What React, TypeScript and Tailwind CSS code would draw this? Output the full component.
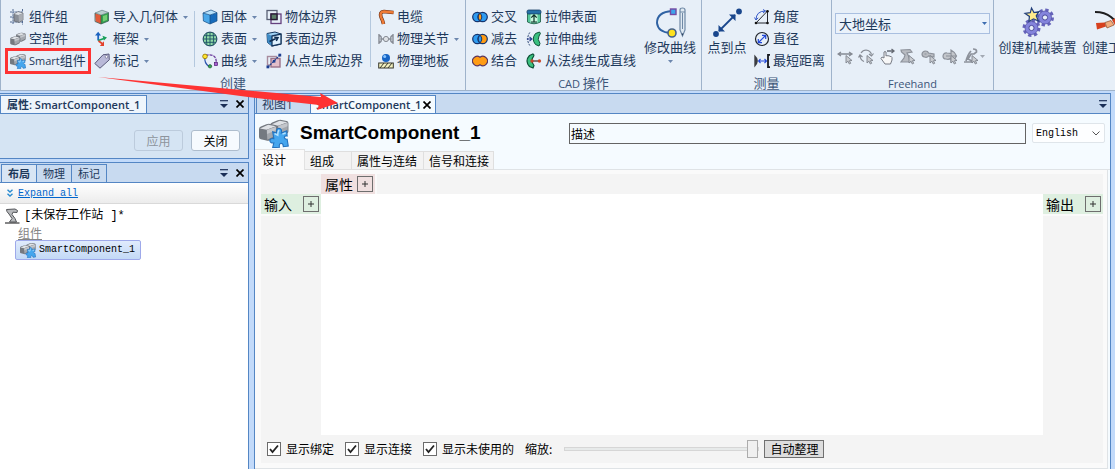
import { ReactNode } from 'react';
import clsx from 'clsx';

/* ---------- Icons ---------- */

function Svg({ children, className = 'w-4 h-4', viewBox = '0 0 16 16' }: { children: ReactNode; className?: string; viewBox?: string }) {
  return (
    <svg className={clsx('block shrink-0', className)} viewBox={viewBox} fill="none" aria-hidden="true">
      {children}
    </svg>
  );
}

function Block({ x, y, s = 1 }: { x: number; y: number; s?: number }) {
  return (
    <g transform={`translate(${x} ${y}) scale(${s})`}>
      <path d="M0 3Q0 2 1 1.6L4 .4Q5 0 6 .2L8.800 .8Q9.700 1 9.700 2V6.200Q9.700 7 9 7.500L6 9Q5 9.500 4 9.200L1 8.500Q0 8.200 0 7.300Z" fill="#747980" />
      <path d="M.5 2.600L5 .6L9.200 1.400L4.200 3.300Z" fill="#dfe2e6" />
      <path d="M4.200 3.300L9.300 1.600V6.300L4.500 8.800Z" fill="#a3a7ad" />
      <path d="M4.400 3.500L9.200 1.900V3.600L4.400 5.600Z" fill="#c3c6cb" />
    </g>
  );
}

function PartIcon() {
  return (
    <Svg>
      <Block x={6} y={1.5} />
      <Block x={0.2} y={5} />
    </Svg>
  );
}

function SmartIcon({ className = 'w-4 h-4' }: { className?: string }) {
  return (
    <Svg className={className}>
      <Block x={6} y={0.8} />
      <Block x={0} y={3} s={0.98} />
      <path
        d="M7.300 7.300L9.400 8Q9 5.600 10.700 5.500Q12.400 5.700 11.900 8L14.800 6.800L15 9.600Q13.700 9.300 13.500 10.400Q13.800 11.500 15 11.300L15.600 15L13 15.300Q13 13.600 11.700 13.500Q10.500 13.800 10.900 15.600L7.300 15.800L7.900 13.300Q5.900 13.500 5.800 12Q6 10.600 7.900 11Z"
        fill="#45a6ee"
        stroke="#2472bd"
        strokeWidth=".6"
      />
      <path d="M8.300 8.300L10 9.200Q10 7 10.800 6.500M12.500 8.600L14.200 8" stroke="#b5e2ff" strokeWidth=".8" />
    </Svg>
  );
}

function GroupIcon() {
  return (
    <Svg>
      <path d="M3 0V15.500M0 3H13M0 13H13M12.500 0V3M12.500 12V15.500M0 8H4" stroke="#526a92" strokeWidth="1" strokeDasharray="2 .6" />
      <path d="M4 5L8 2.700L13 4V11L9 13.500L4 12Z" fill="#8a8f97" stroke="#5e636b" strokeWidth=".7" />
      <path d="M4.300 5L8 3L12.700 4.200L8.500 6Z" fill="#dfe2e6" />
      <path d="M8.500 6L12.800 4.400V10.800L9 13Z" fill="#a9adb3" />
    </Svg>
  );
}

function GeometryIcon() {
  return (
    <Svg>
      <path d="M1 4L7 6V15L1.500 12.500Z" fill="#e25b39" />
      <path d="M7 6L14.500 3.600V12L7 15Z" fill="#35a050" />
      <path d="M1 4L8 1.200L14.500 3.500L7 6Z" fill="#bccfd0" stroke="#547477" strokeWidth=".6" />
      <path d="M7 6V15M1 4V12.500L7 15L14.500 12V3.600" stroke="#31524b" strokeWidth=".7" />
      <path d="M9 7L13 5.800V11L9 12.600Z" fill="#74cf75" />
    </Svg>
  );
}

function FrameIcon() {
  return (
    <Svg>
      <path d="M4.200 9.500V3" stroke="#1b63c0" strokeWidth="1.800" />
      <path d="M1 4.500L4.200 .8L7 4.500Z" fill="#1b63c0" />
      <path d="M4.200 9.500L10 7.500" stroke="#19a05b" strokeWidth="1.600" />
      <path d="M8.500 4.700L13 6.500L10 9.600Z" fill="#19a05b" />
      <path d="M4.500 10L8.500 12.800" stroke="#e3402b" strokeWidth="1.800" />
      <path d="M10 10.200V15H5.800Z" fill="#e3402b" />
    </Svg>
  );
}

function TagIcon() {
  return (
    <Svg>
      <path d="M.8 10.500L9 1.800L15 1L15.300 6.800L6 15.200Z" fill="#b9b9d8" stroke="#5b5b7c" strokeWidth="1" />
      <circle cx="12.500" cy="3.800" r="1.300" fill="#fff" stroke="#5b5b7c" strokeWidth=".6" />
    </Svg>
  );
}

function SolidIcon() {
  return (
    <Svg>
      <path d="M1 4L8 6V15L1.400 12Z" fill="#4aa8ea" />
      <path d="M8 6L15 3.700V12L8 15Z" fill="#176bbb" />
      <path d="M1 4L9 1L15 3.700L8 6Z" fill="#b7e1fa" />
      <path d="M1 4L9 1L15 3.700V12L8 15L1.400 12ZM8 6V15M1 4L8 6L15 3.700" stroke="#124a83" strokeWidth=".7" />
    </Svg>
  );
}

function SurfaceIcon() {
  return (
    <Svg>
      <circle cx="8" cy="8" r="6.900" fill="#8fdaa6" stroke="#153f58" strokeWidth="1" />
      <path d="M1 8H15M2 4.700H14M2 11.300H14M8 1V15M5 1.500Q3.600 8 5 14.500M11 1.500Q12.400 8 11 14.500" stroke="#1d5068" strokeWidth=".9" />
    </Svg>
  );
}

function CurveIcon() {
  return (
    <Svg>
      <path d="M3 4Q2 10 7 13.500" stroke="#2d55b0" strokeWidth="1.200" />
      <path d="M3.500 2.500Q13.500 0 14.200 8V11" stroke="#6b3a9c" strokeWidth="1.300" strokeDasharray="3 1" />
      <circle cx="3" cy="3.400" r="2.300" fill="#ffe531" stroke="#927400" strokeWidth=".8" />
      <circle cx="8" cy="13.300" r="1.700" fill="#36a455" stroke="#174f27" strokeWidth=".6" />
      <rect x="12.400" y="9.500" width="3" height="3" fill="#a85fd0" stroke="#4f1c74" strokeWidth=".7" />
    </Svg>
  );
}

function BodyEdgeIcon() {
  return (
    <Svg>
      <rect x="1" y="1.500" width="10" height="9" stroke="#596075" strokeWidth="1.300" />
      <rect x="5" y="5" width="10" height="9.500" stroke="#65407e" strokeWidth="1.300" />
      <rect x="5" y="5" width="6" height="5.500" fill="#5b7d68" stroke="#281a36" strokeWidth="1.400" />
    </Svg>
  );
}

function FaceEdgeIcon() {
  return (
    <Svg>
      <path d="M1 2.500L9 1L15 3V13L6 15L1.500 11.500Z" fill="#9fd1f3" stroke="#15365d" strokeWidth="1" />
      <path d="M1 2.500L6 5V15L1.500 11.500Z" fill="#3f8cc6" />
      <path d="M6 5L15 3V13L6 15Z" fill="#dff2ff" stroke="#15365d" strokeWidth="1.300" />
      <path d="M3.500 10.500L11 7M8.300 6.200L12 6.600L10.300 10" stroke="#0e2c50" strokeWidth="1.500" />
    </Svg>
  );
}

function PointEdgeIcon() {
  return (
    <Svg>
      <rect x="1.500" y="3.500" width="9" height="8.500" stroke="#a78b9d" strokeWidth="1.400" />
      <rect x="5" y="5.500" width="9" height="8.500" fill="#e3bfca" stroke="#9a7389" strokeWidth="1.400" />
      <path d="M2 14L14 2" stroke="#1d3f91" strokeWidth="1.200" strokeDasharray="2 1" />
      <rect x=".5" y="12.500" width="2.800" height="2.800" fill="#1d3f91" />
      <rect x="12.400" y=".7" width="2.800" height="2.800" fill="#1d3f91" />
      <rect x="6.800" y="7" width="2.600" height="2.600" fill="#1d3f91" />
    </Svg>
  );
}

function CableIcon() {
  return (
    <Svg>
      <path d="M5.500 15Q5 12 3.200 8.500Q1 3 6 2.500Q10 3 15.500 3.500" stroke="#6d2e12" strokeWidth="3.600" />
      <path d="M5.500 15Q5 12 3.200 8.500Q1 3 6 2.500Q10 3 15.500 3.500" stroke="#ee7b37" strokeWidth="2.400" />
    </Svg>
  );
}

function JointIcon() {
  return (
    <Svg>
      <path d="M1 3V13M15 3V13M1 4.500Q4 5 3 8Q4 11 1 11.500M15 4.500Q12 5 13 8Q12 11 15 11.500M3 8H5.300M10.700 8H13" stroke="#868b94" strokeWidth="1.400" />
      <circle cx="8" cy="8" r="2.600" fill="#dfe2e6" stroke="#868b94" />
    </Svg>
  );
}

function FloorIcon() {
  return (
    <Svg>
      <rect x=".7" y="10" width="14.600" height="5" fill="#f3f2c0" stroke="#37372c" strokeWidth="1" />
      <path d="M2 15L6 10M6 15L10 10M10 15L14 10" stroke="#37372c" strokeWidth="1" />
      <circle cx="8" cy="4.900" r="4" fill="#1664c4" />
      <circle cx="6.700" cy="3.600" r="1.500" fill="#86c4ff" />
    </Svg>
  );
}

function BoolIcon({ left, right, mid }: { left: string; right: string; mid: string }) {
  return (
    <Svg>
      <circle cx="5.400" cy="8" r="4.700" fill={left} stroke="#16356e" strokeWidth="1.200" />
      <circle cx="10.600" cy="8" r="4.700" fill={right} stroke="#16356e" strokeWidth="1.200" />
      <path d="M8 4.100Q11.600 8 8 11.900Q4.400 8 8 4.100Z" fill={mid} stroke="#16356e" strokeWidth="1" />
    </Svg>
  );
}

function UniteIcon() {
  return (
    <Svg>
      <path d="M8 4.200A4.700 4.700 0 1 0 8 11.800A4.700 4.700 0 1 0 8 4.200Z" fill="#ff9c14" stroke="#5b3760" strokeWidth="1.200" />
    </Svg>
  );
}

function ExtrudeSurfaceIcon() {
  return (
    <Svg>
      <path d="M1.500 3V13Q8 16.500 14.500 13V3Z" fill="#57c79a" stroke="#15573d" strokeWidth=".8" />
      <rect x="1" y="1" width="14" height="4" rx="1.600" fill="#2471a8" stroke="#173e63" strokeWidth=".8" />
      <rect x="4.500" y="5.500" width="7" height="8" fill="#c8f7de" />
      <path d="M8 13V6.500M5.300 8.600L8 5.800L10.700 8.600M5 13H11" stroke="#0c2f25" strokeWidth="1.200" />
    </Svg>
  );
}

function ExtrudeCurveIcon() {
  return (
    <Svg>
      <path d="M9.500 2.500L13.500 1Q15.500 2 13 5Q11 8 14 12.500L13 15L9.500 13.500Q5 8 9.500 2.500Z" fill="#3ac07f" stroke="#0d5237" strokeWidth="1" />
      <path d="M3.800 1.500Q-.5 8 3.800 14.500" stroke="#2d4675" strokeWidth="1" strokeDasharray="2 1" />
      <path d="M.8 8H5.500M3.500 5.800L5.900 8L3.500 10.200" stroke="#283c8f" strokeWidth="1.100" />
    </Svg>
  );
}

function NormalIcon() {
  return (
    <Svg>
      <path d="M3.500 2.500L7 1Q9 2 6.500 5Q5 8 8 12.500L7 15L3.500 13.500Q-1.500 8 3.500 2.500Z" fill="#3ac07f" stroke="#0d5237" strokeWidth="1.200" />
      <path d="M6 8H13" stroke="#402a24" strokeWidth="1.200" />
      <circle cx="6" cy="8" r="1.700" fill="#c8462a" />
      <circle cx="13.400" cy="8" r="1.700" fill="#c8462a" />
    </Svg>
  );
}

function EditCurveIcon() {
  return (
    <Svg className="w-8 h-8" viewBox="0 0 32 32">
      <path d="M18 5Q3 6 3 17Q4 26 16 27" stroke="#2f62a3" strokeWidth="2" />
      <rect x="16.500" y="3" width="5.500" height="5.500" fill="#3ea2ec" stroke="#734aa3" strokeWidth="1.400" />
      <circle cx="18" cy="27" r="4" fill="#ffe21e" stroke="#46628a" strokeWidth="1.600" />
      <path d="M26 4Q26 2 28.500 2Q31 2 31 4V24L28.500 30L26 24Z" fill="#dfe9f2" stroke="#6f89a6" strokeWidth="1.200" />
      <path d="M26 6H31M28.500 7V23" stroke="#6f89a6" />
      <path d="M27.500 27.500H29.500L28.500 30Z" fill="#293e5c" />
    </Svg>
  );
}

function PointToPointIcon() {
  return (
    <Svg className="w-8 h-8" viewBox="0 0 32 32">
      <path d="M8 25L24 9" stroke="#19468c" strokeWidth="1.800" />
      <path d="M7.500 19V25.500H14ZM24.500 15V8.500H18Z" fill="#19468c" />
      <circle cx="5" cy="28" r="2.900" fill="#19468c" />
      <circle cx="28" cy="5.500" r="2.900" fill="#19468c" />
    </Svg>
  );
}

function AngleIcon() {
  return (
    <Svg>
      <path d="M2 14L13.500 2V14Z" stroke="#23262e" strokeWidth="1" />
      <path d="M2 11Q2 2 11.500 2M2 11L.5 8.500M2 11L4.200 8.800M11.500 2L9 .5M11.500 2L9 4" stroke="#3558c8" strokeWidth="1" />
      <circle cx="13.500" cy="2.300" r="1.300" fill="#111" />
      <circle cx="2" cy="14" r="1.300" fill="#111" />
      <circle cx="13.500" cy="14" r="1.300" fill="#111" />
    </Svg>
  );
}

function DiameterIcon() {
  return (
    <Svg>
      <circle cx="8" cy="8" r="6.500" stroke="#1f232b" strokeWidth="1.200" />
      <path d="M4.500 11.500L11.500 4.500M8 4.300H11.700V8M8 11.700H4.300V8" stroke="#2349d8" strokeWidth="1.200" />
    </Svg>
  );
}

function DistanceIcon() {
  return (
    <Svg>
      <path d="M.3 1.500Q7.500 8 .3 14.500Z" fill="#3b3d42" />
      <path d="M16 1.800H14V14.200H16" stroke="#15171c" strokeWidth="1.800" />
      <path d="M4.500 8H12.500M6.500 6L4.600 8L6.500 10M10.500 6L12.500 8L10.500 10" stroke="#2349d8" strokeWidth="1.100" />
    </Svg>
  );
}

function Gear({ x, y }: { x: number; y: number }) {
  return (
    <g transform={`translate(${x} ${y})`}>
      <circle r="7.500" stroke="#6664ba" strokeWidth="3" strokeDasharray="3.300 2.590" />
      <circle r="6.500" fill="#8484dc" stroke="#5553a8" strokeWidth=".8" />
      <circle r="2.600" fill="#e7eff8" stroke="#4c4a9c" strokeWidth="1" />
    </g>
  );
}

function MechanismIcon() {
  return (
    <Svg className="w-8 h-8" viewBox="0 0 32 32">
      <Gear x={23} y={11.5} />
      <Gear x={9.5} y={22} />
      <path d="M9.500 2L12 6.500L17 5.600L14.200 9.800L16.500 15L11.600 12.800L7 15.500L7.400 10.400L3 7.400L8.300 6.600Z" fill="#ffeb8a" stroke="#223e7a" strokeWidth="1.200" />
    </Svg>
  );
}

function ToolIcon() {
  return (
    <Svg className="w-8 h-8" viewBox="0 0 32 32">
      <path d="M3 6Q13 6 19 11Q25 17 31 17" stroke="#1d1d1f" strokeWidth="2" />
      <path d="M4 17L13 16.500L14 20.500L5 23.500Z" fill="#d7401e" />
      <path d="M13 16.500L19 14.500L22 19L15 22Z" fill="#f2ac7c" stroke="#8b4a28" strokeWidth=".7" />
      <path d="M20 14L25 11L28 16L24 21Z" fill="#d7401e" />
    </Svg>
  );
}

const cursor = 'M9 7.500V15L11 13.200L12.300 16L13.700 15.300L12.400 12.700L15 12.500Z';

const freehandTools: { name: string; art: ReactNode }[] = [
  {
    name: '移动',
    art: <path d="M1 6H15M4 4L1 6L4 8M12 4L15 6L12 8" stroke="#858a93" strokeWidth="1.300" />,
  },
  {
    name: '旋转',
    art: <path d="M6 13.500Q2.500 12 2 8M3 5Q5 2 8 2Q12.500 2.500 13.500 6.500M.5 9.500L2 7L4.500 9M15.500 5.500L13.500 8L11 6" stroke="#858a93" strokeWidth="1.200" />,
  },
  {
    name: '拖曳',
    art: (
      <>
        <path d="M3 9L5 10V4Q6 3 7 4V8Q8 7 9 8Q10 7 11 8.500Q12.500 8 13 9.500V12L11.500 16H6L2 10.500Z" fill="#f7f7f7" stroke="#777b84" strokeWidth="1" />
        <path d="M8 3H15M12.500 1L15 3L12.500 5" stroke="#666b74" strokeWidth="1.300" />
      </>
    ),
  },
  {
    name: '手动关节',
    art: <path d="M1 2L10 1.500L12 4L7 5L9 9L10 14H1L4 10L5 7L1.500 4Z" fill="#b9bcc2" stroke="#8d929b" strokeWidth="1.200" />,
  },
  {
    name: '手动线性',
    art: <path d="M1 6Q1.500 3 4.500 3Q7 3 7.500 5L13 6V9L7.500 8Q6 10 3.500 9Q1 8.500 1 6ZM3.500 6H5.500" fill="#b9bcc2" stroke="#8d929b" strokeWidth="1.200" />,
  },
  {
    name: '手动重定位',
    art: <path d="M1 8Q1.500 4.500 5 5Q8 5 9 6V2Q13 4 14.500 8Q13 12 9 14V10Q7 12 4 11Q1 11 1 8ZM4 8H14" fill="#c3c6cb" stroke="#8d929b" strokeWidth="1.200" />,
  },
  {
    name: '多个机器人',
    art: <path d="M10 1Q14 1 13.500 4L11 6H8L5 11L9 13M1 14H10M8 3Q5 6 3 13" stroke="#8d929b" strokeWidth="1.700" />,
  },
];

function RobotIcon() {
  return (
    <Svg>
      <path d="M2.500 1.500L11 1L13.500 2.500L13 4.500L9 4.200L8 6.500L11 10.500L12.500 14H5.500L8 10.500L5 6L3 3.600Z" fill="#b7b9bc" stroke="#54565a" strokeWidth="1" />
      <path d="M1 15H15.500" stroke="#37383a" strokeWidth="1.200" />
    </Svg>
  );
}

function Caret({ className = 'text-[#6c86ad]' }: { className?: string }) {
  return (
    <Svg className={clsx('w-[5px] h-[3px]', className)} viewBox="0 0 5 3">
      <path d="M0 0H5L2.500 3Z" fill="currentColor" />
    </Svg>
  );
}

function PaneMenu() {
  return (
    <button type="button" aria-label="窗口选项" className="text-[#1b2f57]">
      <Svg className="w-2 h-2" viewBox="0 0 8 8">
        <path d="M0 .7H8" stroke="currentColor" strokeWidth="1.200" />
        <path d="M0 4H8L4 8Z" fill="currentColor" />
      </Svg>
    </button>
  );
}

function CloseButton() {
  return (
    <button type="button" aria-label="关闭" className="text-black">
      <Svg className="w-2 h-2" viewBox="0 0 8 8">
        <path d="M.5 .5L7.500 7.500M7.500 .5L.5 7.500" stroke="currentColor" strokeWidth="1.700" />
      </Svg>
    </button>
  );
}

/* ---------- Ribbon ---------- */

interface Command {
  label: string;
  latin?: string;
  icon: ReactNode;
  menu?: boolean;
  marked?: boolean;
}

function Column({ items, className }: { items: Command[]; className: string }) {
  return (
    <div className={clsx('flex shrink-0 flex-col items-start', className)}>
      {items.map((item) => (
        <button key={item.label} type="button" className="relative flex h-[22px] items-center gap-[3px] whitespace-nowrap">
          {item.icon}
          <span>
            {item.latin && <span className="text-[11px]">{item.latin}</span>}
            {item.label}
          </span>
          {item.menu && (
            <span className="ml-[2px]">
              <Caret />
            </span>
          )}
          {item.marked && <span className="absolute -inset-x-[5px] -inset-y-[2px] border-3 border-[#fe3333]" />}
        </button>
      ))}
    </div>
  );
}

function BigButton({ label, icon, menu, className }: { label: string; icon: ReactNode; menu?: boolean; className: string }) {
  return (
    <button type="button" className={clsx('flex shrink-0 flex-col items-center whitespace-nowrap', className)}>
      {icon}
      <span className="leading-[18px]">{label}</span>
      {menu && (
        <span className="mt-1">
          <Caret />
        </span>
      )}
    </button>
  );
}

function Group({ label, latin, children, className }: { label?: string; latin?: string; children?: ReactNode; className?: string }) {
  return (
    <section className="shrink-0 border-r border-[#9fb3cb]">
      <div className={clsx('flex h-[76px] items-start pt-[6px]', className)}>{children}</div>
      <div className="h-[14px] text-center leading-[14px] text-[#3c5578]">
        {latin && <span className="text-[11px]">{latin}</span>}
        {label}
      </div>
    </section>
  );
}

function Divider() {
  return <div className="mr-[7px] mt-[5px] h-[56px] w-px shrink-0 bg-[#b4c8de]" />;
}

const blue = '#2f9cf0';
const orange = '#ff9c14';

function Ribbon() {
  return (
    <header className="flex overflow-hidden border-b border-l border-[#9fb3cb] bg-[#e7eff8] font-['Open_Sans','Noto_Sans_CJK_SC',sans-serif] text-[13px] text-[#1e395b]">
      <Group label="创建" className="pl-[9px]">
        <Column
          className="w-[84px]"
          items={[
            { label: '组件组', icon: <GroupIcon /> },
            { label: '空部件', icon: <PartIcon /> },
            { label: '组件', latin: 'Smart', icon: <SmartIcon />, marked: true },
          ]}
        />
        <Column
          className="w-[100px]"
          items={[
            { label: '导入几何体', icon: <GeometryIcon />, menu: true },
            { label: '框架', icon: <FrameIcon />, menu: true },
            { label: '标记', icon: <TagIcon />, menu: true },
          ]}
        />
        <Divider />
        <Column
          className="w-[64px]"
          items={[
            { label: '固体', icon: <SolidIcon />, menu: true },
            { label: '表面', icon: <SurfaceIcon />, menu: true },
            { label: '曲线', icon: <CurveIcon />, menu: true },
          ]}
        />
        <Column
          className="w-[104px]"
          items={[
            { label: '物体边界', icon: <BodyEdgeIcon /> },
            { label: '表面边界', icon: <FaceEdgeIcon /> },
            { label: '从点生成边界', icon: <PointEdgeIcon /> },
          ]}
        />
        <Divider />
        <Column
          className="w-[87px]"
          items={[
            { label: '电缆', icon: <CableIcon /> },
            { label: '物理关节', icon: <JointIcon />, menu: true },
            { label: '物理地板', icon: <FloorIcon /> },
          ]}
        />
      </Group>

      <Group latin="CAD " label="操作" className="pl-[6px]">
        <Column
          className="w-[54px]"
          items={[
            { label: '交叉', icon: <BoolIcon left={blue} right={blue} mid={orange} /> },
            { label: '减去', icon: <BoolIcon left={blue} right={orange} mid={blue} /> },
            { label: '结合', icon: <UniteIcon /> },
          ]}
        />
        <Column
          className="w-[113px]"
          items={[
            { label: '拉伸表面', icon: <ExtrudeSurfaceIcon /> },
            { label: '拉伸曲线', icon: <ExtrudeCurveIcon /> },
            { label: '从法线生成直线', icon: <NormalIcon /> },
          ]}
        />
        <BigButton className="w-[62px]" label="修改曲线" icon={<EditCurveIcon />} menu />
      </Group>

      <Group label="测量">
        <BigButton className="w-[50px]" label="点到点" icon={<PointToPointIcon />} />
        <Column
          className="w-[79px] pl-[2px]"
          items={[
            { label: '角度', icon: <AngleIcon /> },
            { label: '直径', icon: <DiameterIcon /> },
            { label: '最短距离', icon: <DistanceIcon /> },
          ]}
        />
      </Group>

      <Group latin="Freehand" className="w-[161px] flex-col px-[3px]">
        <div className="mt-[7px] grid w-full items-center">
          <select
            aria-label="参考坐标系"
            className="col-start-1 row-start-1 h-[21px] appearance-none border border-[#a9bfe0] bg-[#eaf2fb] px-[3px] leading-[18px]"
          >
            <option>大地坐标</option>
          </select>
          <span className="pointer-events-none col-start-1 row-start-1 mr-[3px] justify-self-end">
            <Caret className="text-[#3d6db0]" />
          </span>
        </div>
        <div className="mt-[14px] flex w-full items-center gap-[4px] pl-[2px]">
          {freehandTools.map((tool, index) => (
            <button key={tool.name} type="button" aria-label={tool.name} title={tool.name}>
              <Svg className="w-[17px] h-[17px]" viewBox="0 0 17 17">
                {tool.art}
                {index !== 2 && <path d={cursor} fill="#c9ccd1" stroke="#7f848d" strokeWidth=".9" />}
              </Svg>
            </button>
          ))}
          <Caret className="-ml-1 text-[#a3a9b3]" />
        </div>
      </Group>

      <Group className="gap-[4px] pl-[4px]">
        <BigButton className="w-[79px]" label="创建机械装置" icon={<MechanismIcon />} />
        <BigButton className="w-[54px]" label="创建工具" icon={<ToolIcon />} />
      </Group>
    </header>
  );
}

/* ---------- Left panes ---------- */

function PaneBar({ children, closable = true }: { children: ReactNode; closable?: boolean }) {
  return (
    <div className="flex h-[20px] items-end border-b border-[#5486c4] bg-[#c8daf0] font-['Open_Sans','Noto_Sans_CJK_SC',sans-serif] text-xs text-[#1e395b]">
      {children}
      <div className={clsx('ml-auto flex shrink-0 items-center gap-[8px] self-center', closable ? 'pr-[4px]' : 'pr-[3px]')}>
        <PaneMenu />
        {closable && <CloseButton />}
      </div>
    </div>
  );
}

const tabBase = 'h-[18px] border border-b-0 border-[#5486c4] leading-[17px] whitespace-nowrap';

function PropertiesPane() {
  return (
    <section className="border-y border-r border-[#5486c4] bg-[#d5e4f3]">
      <PaneBar>
        <h2 className={clsx(tabBase, 'bg-[#eef5fc] px-[6px] text-[11px] font-semibold')}>属性: SmartComponent_1</h2>
      </PaneBar>
      <div className="flex justify-end gap-[8px] px-[8px] pb-[7px] pt-[16px] text-xs">
        <button type="button" disabled className="h-[21px] w-[49px] rounded-[3px] border border-[#bccbdc] leading-[19px] text-[#8d949c]">
          应用
        </button>
        <button type="button" className="h-[21px] w-[49px] rounded-[3px] border border-[#aebdcd] bg-[#f6fafe] leading-[19px] text-black">
          关闭
        </button>
      </div>
    </section>
  );
}

function LayoutPane() {
  return (
    <section className="flex flex-1 flex-col border-r border-t border-[#5486c4] bg-white">
      <PaneBar>
        <div role="tablist" className="flex pl-px">
          <button type="button" role="tab" aria-selected="true" className={clsx(tabBase, 'w-[36px] bg-[#d8e5f4] text-[11px] font-semibold')}>
            布局
          </button>
          <button type="button" role="tab" className={clsx(tabBase, '-ml-px w-[36px] text-[11px]')}>
            物理
          </button>
          <button type="button" role="tab" className={clsx(tabBase, '-ml-px w-[36px] text-[11px]')}>
            标记
          </button>
        </div>
      </PaneBar>
      <div className="flex h-[21px] items-center gap-[5px] border-b border-[#d9d9d9] bg-linear-to-b from-white to-[#ececec] pl-[7px]">
        <Svg className="w-[6px] h-[8px] text-[#2a8bd0]" viewBox="0 0 6 8">
          <path d="M.5 .7L3 3L5.500 .7M.5 4.700L3 7L5.500 4.700" stroke="currentColor" strokeWidth="1.400" />
        </Svg>
        <a href="#expand" className="font-['Liberation_Mono',monospace] text-[10px] text-[#0066cc] underline">
          Expand all
        </a>
      </div>
      <ul className="pl-[4px] pt-[3px] text-xs text-black">
        <li>
          <div className="flex h-[18px] items-center gap-[4px] font-['Liberation_Mono','Noto_Sans_CJK_SC',monospace]">
            <RobotIcon />
            [未保存工作站 ]*
          </div>
          <ul className="pl-[14px]">
            <li className="h-[15px] leading-[15px] text-[#858585] underline">组件</li>
          </ul>
          <ul className="pl-[11px]">
            <li className="flex h-[20px] w-[126px] items-center gap-[3px] rounded-[2px] border border-[#9ea9ea] bg-linear-to-b from-[#e0ebfc] to-[#c3d9f6] pl-[4px] font-['Liberation_Mono',monospace] text-[10px]">
              <SmartIcon />
              SmartComponent_1
            </li>
          </ul>
        </li>
      </ul>
    </section>
  );
}

/* ---------- Smart component editor ---------- */

function AddButton({ label }: { label: string }) {
  return (
    <button type="button" aria-label={label} className="grid h-4 w-4 place-items-center border border-[#6e6e6e] text-[#333]">
      <Svg className="w-[6px] h-[6px]" viewBox="0 0 6 6">
        <path d="M0 3H6M3 0V6" stroke="currentColor" strokeWidth="1" />
      </Svg>
    </button>
  );
}

function Check({ label }: { label: string }) {
  return (
    <label className="flex items-center gap-[5px] whitespace-nowrap">
      <span className="grid">
        <input type="checkbox" defaultChecked className="peer col-start-1 row-start-1 h-[14px] w-[14px] appearance-none border border-[#6b6b6b] bg-white" />
        <Svg className="pointer-events-none invisible col-start-1 row-start-1 w-[14px] h-[14px] peer-checked:visible" viewBox="0 0 14 14">
          <path d="M3 7L5.500 10L11 3.500" stroke="#222" strokeWidth="1.800" />
        </Svg>
      </span>
      {label}
    </label>
  );
}

const editorTabs = [
  { label: '组成', width: 'w-[47px]' },
  { label: '属性与连结', width: 'w-[72px]' },
  { label: '信号和连接', width: 'w-[70px]' },
];

function Editor() {
  return (
    <main className="flex min-w-0 flex-1 flex-col border-x border-t border-[#5486c4] bg-[#f5fbff]">
      <PaneBar closable={false}>
        <div role="tablist" className="flex pl-px">
          <button type="button" role="tab" className={clsx(tabBase, 'w-[54px] border-r-0 pl-[5px] text-left')}>
            视图1
          </button>
          <div className={clsx(tabBase, 'flex w-[126px] items-center justify-between bg-[#f5fbff] pl-[5px] pr-[4px] text-[11px] font-semibold')}>
            <button type="button" role="tab" aria-selected="true">
              SmartComponent_1
            </button>
            <CloseButton />
          </div>
        </div>
      </PaneBar>

      <div className="flex h-[35px] items-center pl-[4px] pr-[5px] pt-[3px]">
        <SmartIcon className="h-[30px] w-[30px]" />
        <h1 className="w-[280px] shrink-0 pl-[11px] font-['Liberation_Sans',sans-serif] text-[19px] font-bold leading-6 text-black">SmartComponent_1</h1>
        <input
          aria-label="描述"
          defaultValue="描述"
          className="h-[21px] min-w-0 flex-1 border border-[#646464] px-px text-xs leading-[18px] text-black"
        />
        <div className="ml-[6px] grid w-[73px] shrink-0 items-center">
          <select
            aria-label="语言"
            className="col-start-1 row-start-1 h-[20px] appearance-none rounded-[2px] border border-[#dfe5ea] bg-[#fdfeff] pl-[3px] font-['Liberation_Mono',monospace] text-[10px] text-black"
          >
            <option>English</option>
          </select>
          <Svg className="pointer-events-none col-start-1 row-start-1 mr-[5px] w-[8px] h-[5px] justify-self-end" viewBox="0 0 8 5">
            <path d="M.5 .5L4 4L7.500 .5" stroke="#555" strokeWidth="1" />
          </Svg>
        </div>
      </div>

      <div role="tablist" className="flex items-end text-xs leading-[18px] text-black">
        <button type="button" role="tab" aria-selected="true" className="h-[21px] w-[50px] border-r border-t border-[#e2e2e2] bg-[#fafafa] pl-[7px] text-left">
          设计
        </button>
        {editorTabs.map((tab) => (
          <button
            key={tab.label}
            type="button"
            role="tab"
            className={clsx('h-[19px] border-b border-r border-t border-[#dfdfdf] bg-[#f3f3f3] pl-[5px] text-left whitespace-nowrap', tab.width)}
          >
            {tab.label}
          </button>
        ))}
        <div className="flex-1 self-stretch border-b border-[#dfe3e6]" />
      </div>

      <div className="mr-[2px] flex flex-1 flex-col border-b border-r border-[#dfe3e6] bg-[#fafafa] px-[4px] pb-[5px] pl-[6px] pt-[4px]">
        <div className="flex h-[20px] bg-[#f4f4f4] pl-[60px] text-sm leading-[18px]">
          <div className="flex w-[56px] items-center justify-between border-r-2 border-[#fafafa] bg-[#f0e0e0] pl-[4px] pr-[2px]">
            属性
            <AddButton label="添加属性" />
          </div>
        </div>
        <div className="flex flex-1 text-sm leading-[18px]">
          <div className="w-[60px] shrink-0 bg-[#f4f4f4]">
            <div className="flex h-[22px] items-center justify-between border-b-2 border-[#fafafa] bg-[#deefe0] pl-[3px] pr-[2px]">
              输入
              <AddButton label="添加输入" />
            </div>
          </div>
          <div className="min-w-0 flex-1 bg-white" />
          <div className="w-[60px] shrink-0 bg-[#f4f4f4]">
            <div className="flex h-[22px] items-center justify-between border-b-2 border-[#fafafa] bg-[#deefe0] pl-[3px] pr-[2px]">
              输出
              <AddButton label="添加输出" />
            </div>
          </div>
        </div>
        <div className="flex h-[28px] items-center gap-[11px] bg-[#f4f4f4] pl-[6px] text-xs text-black">
          <Check label="显示绑定" />
          <Check label="显示连接" />
          <Check label="显示未使用的" />
          <label className="flex items-center gap-[12px] whitespace-nowrap">
            缩放:
            <input
              type="range"
              defaultValue={100}
              className="h-[18px] w-[195px] appearance-none bg-transparent [&::-webkit-slider-runnable-track]:h-[4px] [&::-webkit-slider-runnable-track]:border [&::-webkit-slider-runnable-track]:border-[#d6d6d6] [&::-webkit-slider-runnable-track]:bg-[#e7eaea] [&::-webkit-slider-thumb]:-mt-[8px] [&::-webkit-slider-thumb]:h-[18px] [&::-webkit-slider-thumb]:w-[11px] [&::-webkit-slider-thumb]:appearance-none [&::-webkit-slider-thumb]:border [&::-webkit-slider-thumb]:border-[#acacac] [&::-webkit-slider-thumb]:bg-[#f0f0f0]"
            />
          </label>
          <button type="button" className="-ml-[6px] h-[18px] w-[60px] border border-[#707070] bg-[#dddddd] leading-4">
            自动整理
          </button>
        </div>
      </div>
    </main>
  );
}

export default function App() {
  return (
    <div className="relative flex min-h-screen flex-col overflow-hidden bg-[#c2dafa] font-['Noto_Sans_CJK_SC',sans-serif]">
      <Ribbon />
      <div className="flex flex-1 gap-[5px] pr-[4px] pt-[2px]">
        <aside className="flex w-[249px] shrink-0 flex-col gap-[3px]">
          <PropertiesPane />
          <LayoutPane />
        </aside>
        <Editor />
      </div>

      {/* Callout arrow from the Smart component command to its editor tab */}
      <svg className="pointer-events-none absolute left-[98px] top-[76px] h-[36px] w-[242px]" viewBox="0 0 242 36" aria-hidden="true">
        <path d="M0 1L223 21L222 17L240 27L219 34L221 29L150 21Z" fill="#fe3333" />
      </svg>
    </div>
  );
}
